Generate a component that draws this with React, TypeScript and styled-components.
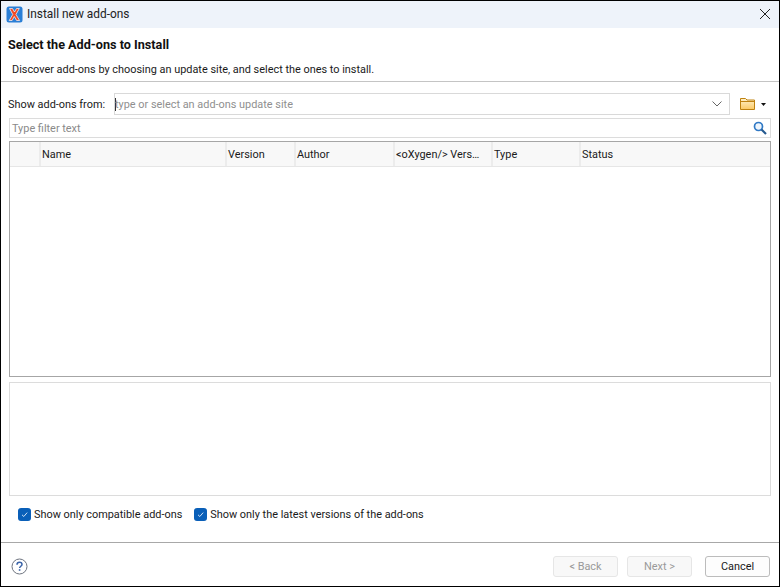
import React from "react";
import styled, { createGlobalStyle } from "styled-components";

const Global = createGlobalStyle`
  html, body { margin: 0; padding: 0; background: #fff; }
  * { box-sizing: border-box; }
`;

const Window = styled.div`
  width: 780px;
  height: 587px;
  border: 1px solid #000;
  background: #fff;
  display: flex;
  flex-direction: column;
  font-family: "Roboto", "Noto Sans", sans-serif;
  font-size: 10.9px;
  color: #1a1a1a;
  overflow: hidden;
`;

const TitleBar = styled.div`
  flex: 0 0 27px;
  height: 27px;
  background: #eef3fa;
  display: flex;
  align-items: center;
  padding: 0 7px 1px 5px;
  gap: 4px;
`;

const TitleText = styled.span`
  flex: 1;
  font-size: 11.900px;
  color: #222;
`;

const CloseBtn = styled.span`
  display: flex;
  width: 12px;
  height: 12px;
  margin-right: 1px;
`;

const Banner = styled.div`
  flex: 0 0 54px;
  border-bottom: 1px solid #c4c4c4;
  display: flex;
  flex-direction: column;
  padding: 9px 0 0 7px;
`;

const Heading = styled.div`
  font-size: 12.650px;
  font-weight: 700;
  line-height: 16px;
  color: #111;
`;

const SubHeading = styled.div`
  margin-top: 9px;
  margin-left: 4px;
  line-height: 16px;
  color: #1a1a1a;
`;

const Content = styled.div`
  flex: 1;
  display: flex;
  flex-direction: column;
  padding: 11px 8px 0 8px;
  min-height: 0;
`;

const SiteRow = styled.div`
  display: flex;
  align-items: center;
  height: 22px;
`;

const SiteLabel = styled.label`
  width: 106px;
  margin-left: -1px;
  flex: none;
`;

const Combo = styled.div`
  width: 616px;
  height: 22px;
  border: 1px solid #d9d9d9;
  display: flex;
  align-items: center;
  padding: 0 7px 0 0;
  color: #8f8f8f;
  flex: none;
`;

const Caret = styled.span`
  width: 1px;
  height: 13px;
  background: #333;
  margin-right: -1px;
`;

const ComboText = styled.span`
  flex: 1;
`;

const FolderBtn = styled.div`
  display: flex;
  align-items: center;
  margin-left: 10px;
  gap: 6px;
`;

const FilterBox = styled.div`
  margin-top: 3px;
  width: 762px;
  height: 20px;
  border: 1px solid #dcdcdc;
  display: flex;
  align-items: center;
  justify-content: space-between;
  padding: 0 3px 0 2px;
  color: #8a8a8a;
`;

const Table = styled.div`
  margin-top: 3px;
  width: 762px;
  height: 236px;
  border: 1px solid #a6a6a6;
  flex: none;
`;

const HeaderRow = styled.div`
  display: flex;
  height: 25px;
  background: #fff;
  border-bottom: 1px solid #e6e6e6;
`;

const HeaderCell = styled.div<{ $w: number; $grow?: boolean }>`
  flex: ${(p) => (p.$grow ? "1" : `0 0 ${p.$w}px`)};
  background: #f8f8f8;
  border-right: 2px solid #ececec;
  display: flex;
  align-items: center;
  padding-left: 1px;
  white-space: nowrap;
  overflow: hidden;
  &:last-child { border-right: 0; }
`;

const Details = styled.div`
  margin-top: 5px;
  width: 762px;
  height: 114px;
  border: 1px solid #dcdcdc;
  flex: none;
`;

const Options = styled.div`
  display: flex;
  align-items: center;
  margin-top: 9px;
  padding-left: 9px;
  gap: 12px;
  height: 18px;
`;

const CheckLabel = styled.label`
  display: flex;
  align-items: center;
  gap: 3px;
  color: #1a1a1a;
`;

const CheckBox = styled.span`
  width: 13px;
  height: 13px;
  border-radius: 3px;
  background: #0a5fb8;
  display: flex;
  align-items: center;
  justify-content: center;
`;

const Footer = styled.div`
  flex: 0 0 44px;
  border-top: 1px solid #a8a8a8;
  display: flex;
  align-items: center;
  padding: 3px 9px 0 10px;
`;

const HelpIcon = styled.span`
  display: flex;
  margin-right: auto;
`;

const DialogButton = styled.button<{ $primary?: boolean }>`
  width: 65px;
  height: 21px;
  padding: 0;
  font: inherit;
  border-radius: 3px;
  border: 1px solid ${(p) => (p.$primary ? "#bcbcbc" : "#e6e6e6")};
  background: ${(p) => (p.$primary ? "#fdfdfd" : "#f8f8f8")};
  color: ${(p) => (p.$primary ? "#1a1a1a" : "#9a9a9a")};
  margin-left: ${(p) => (p.$primary ? "13px" : "9px")};
  &:first-of-type { margin-left: 0; }
`;

const columns = [
  { label: "", w: 31 },
  { label: "Name", w: 186 },
  { label: "Version", w: 69 },
  { label: "Author", w: 99 },
  { label: "<oXygen/> Vers…", w: 98 },
  { label: "Type", w: 88 },
  { label: "Status", w: 0, grow: true },
];

const Check = () => (
  <svg width="9" height="9" viewBox="0 0 9 9" fill="none">
    <path d="M2 4.800 3.800 6.500 7.200 2.600" stroke="#cfe2f7" strokeWidth="1" />
  </svg>
);

export default function App() {
  return (
    <>
      <Global />
      <Window>
        <TitleBar>
          <svg width="17" height="17" viewBox="0 0 17 17">
            <rect x="0.500" y="0.500" width="16" height="16" rx="2.500" fill="#2a7fd6" />
            <path
              d="M3.500 2.500h3l2 3.500 2-3.500h2.800l-3.300 6 3.600 6h-3l-2.300-4-2.200 4H3.200l3.500-6z"
              fill="#f04a26"
              stroke="#fff"
              strokeWidth="0.700"
            />
          </svg>
          <TitleText>Install new add-ons</TitleText>
          <CloseBtn>
            <svg width="12" height="12" viewBox="0 0 12 12">
              <path d="M1 1 11 11M11 1 1 11" stroke="#222" strokeWidth="1" fill="none" />
            </svg>
          </CloseBtn>
        </TitleBar>
        <Banner>
          <Heading>Select the Add-ons to Install</Heading>
          <SubHeading>Discover add-ons by choosing an update site, and select the ones to install.</SubHeading>
        </Banner>
        <Content>
          <SiteRow>
            <SiteLabel>Show add-ons from:</SiteLabel>
            <Combo>
              <Caret />
              <ComboText>type or select an add-ons update site</ComboText>
              <svg width="10" height="6" viewBox="0 0 10 6">
                <path d="M.5.5 5 5 9.500.5" stroke="#666" fill="none" />
              </svg>
            </Combo>
            <FolderBtn>
              <svg width="15" height="12" viewBox="0 0 15 12">
                <defs>
                  <linearGradient id="folderFill" x1="0" y1="0" x2="0" y2="1">
                    <stop offset="0" stopColor="#fff3cf" />
                    <stop offset="1" stopColor="#fbc964" />
                  </linearGradient>
                </defs>
                <path d="M.5 11.500V.5h5l1.500 1.500h7.500v9.500z" fill="url(#folderFill)" stroke="#bf8210" />
                <path d="M1 3.500h13" stroke="#bf8210" />
              </svg>
              <svg width="5" height="3" viewBox="0 0 5 3">
                <path d="M0 0h5L2.500 3z" fill="#111" />
              </svg>
            </FolderBtn>
          </SiteRow>
          <FilterBox>
            <span>Type filter text</span>
            <svg width="14" height="14" viewBox="0 0 14 14">
              <circle cx="5.500" cy="5.500" r="4" fill="#eef5fc" stroke="#2f78c4" strokeWidth="1.700" />
              <path d="M8.500 8.500 13 13" stroke="#24598f" strokeWidth="2.200" />
            </svg>
          </FilterBox>
          <Table>
            <HeaderRow>
              {columns.map((c, i) => (
                <HeaderCell key={i} $w={c.w} $grow={c.grow}>
                  {c.label}
                </HeaderCell>
              ))}
            </HeaderRow>
          </Table>
          <Details />
          <Options>
            <CheckLabel>
              <CheckBox>
                <Check />
              </CheckBox>
              Show only compatible add-ons
            </CheckLabel>
            <CheckLabel>
              <CheckBox>
                <Check />
              </CheckBox>
              Show only the latest versions of the add-ons
            </CheckLabel>
          </Options>
        </Content>
        <Footer>
          <HelpIcon>
            <svg width="17" height="17" viewBox="0 0 17 17">
              <circle cx="8.500" cy="8.500" r="7.500" fill="#fff" stroke="#6e7480" strokeWidth="1" />
              <path
                d="M6 6.700C6 5 7.200 4.300 8.500 4.300S11 5.100 11 6.500C11 8.200 8.600 8.300 8.600 10"
                fill="none"
                stroke="#3a63a8"
                strokeWidth="1.500"
              />
              <rect x="7.800" y="11.200" width="1.600" height="1.600" fill="#3a63a8" />
            </svg>
          </HelpIcon>
          <DialogButton disabled>&lt; Back</DialogButton>
          <DialogButton disabled>Next &gt;</DialogButton>
          <DialogButton $primary>Cancel</DialogButton>
        </Footer>
      </Window>
    </>
  );
}
